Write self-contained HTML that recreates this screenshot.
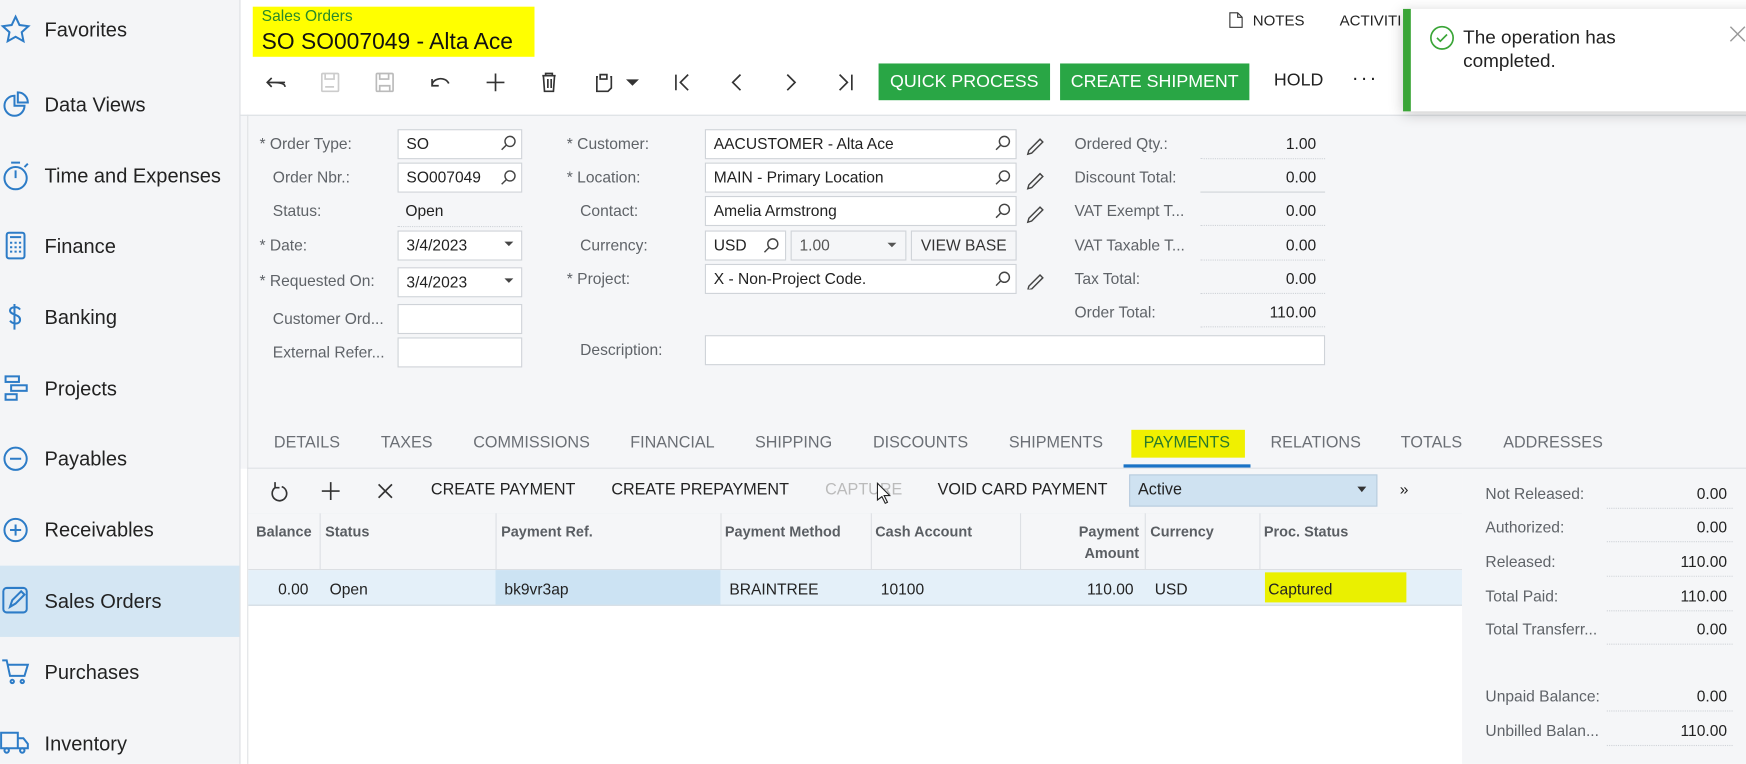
<!DOCTYPE html>
<html><head><meta charset="utf-8"><style>
html,body{margin:0;padding:0;width:1746px;height:764px;overflow:hidden;background:#fff}
#w{position:absolute;left:0;top:0;width:1568px;height:686px;transform:scale(1.11352);transform-origin:0 0;font-family:"Liberation Sans",sans-serif;color:#222}
.a{position:absolute}
.t{position:absolute;white-space:nowrap;line-height:20px;font-size:14px}
.lb{color:#5f6368}
.in{position:absolute;background:#fff;border:1px solid #cfd3d8;box-sizing:border-box;height:27px;font-size:14px;line-height:25px;padding-left:7px;white-space:nowrap}
.ul{position:absolute;border-bottom:1px dotted #cfd3d8;height:0}
.side{font-size:18px;color:#222}
.tab{position:absolute;top:388px;font-size:14.5px;color:#6b6f75;line-height:20px}
.gh{position:absolute;font-size:13px;font-weight:bold;color:#5a5e63;line-height:19px}
.gc{position:absolute;top:519px;font-size:14px;line-height:20px}
.vl{position:absolute;width:1px;background:#dde0e4}
</style></head><body><div id="w">
<!-- sidebar -->
<div class="a" style="left:0;top:0;width:215px;height:686px;background:#f4f5f7;border-right:1px solid #dcdfe3"></div>
<div class="a" style="left:0;top:508px;width:215px;height:64px;background:#d4e6f3"></div>
<svg class="a" style="left:0;top:0" width="40" height="686" fill="none" stroke="#2d7cc7" stroke-width="1.8">
<path d="M14 15l3.5 7.5 8 1-6 5.5 1.6 8L14 33l-7.1 4 1.6-8-6-5.5 8-1z"/>
<path d="M13 86a9 9 0 1 0 9 9h-9z"/><path d="M16 83v9h9a9 9 0 0 0-9-9z"/>
<circle cx="14" cy="160" r="10"/><path d="M14 153v7M10 146h8M22 150l3-3"/>
<rect x="6" y="209" width="16" height="23" rx="2"/><path d="M9 213h10M9 218h2M13 218h2M17 218h2M9 222h2M13 222h2M17 222h2M9 226h2M13 226h2M17 226h2"/>
<path d="M18 278c-2-3-9-3-9 1s9 3 9 8-7 4-9 1M13 273v23"/>
<rect x="5" y="338" width="12" height="5"/><rect x="10" y="346" width="14" height="5"/><rect x="5" y="354" width="10" height="5"/>
<circle cx="14" cy="412" r="10"/><path d="M9 412h10"/>
<circle cx="14" cy="476" r="10"/><path d="M9 476h10M14 471v10"/>
<rect x="3" y="528" width="21" height="22" rx="3"/><path d="M9 545l2-6 8-8 3 3-8 8z"/>
<path d="M2 593h4l3 14h13l3-10H7"/><circle cx="11" cy="612" r="1.5"/><circle cx="20" cy="612" r="1.5"/>
<path d="M1 658h15v14H1zM16 663h5l4 5v4h-9"/><circle cx="6" cy="674" r="2"/><circle cx="20" cy="674" r="2"/>
</svg>
<div class="t side" style="left:40px;top:17px">Favorites</div>
<div class="t side" style="left:40px;top:84px">Data Views</div>
<div class="t side" style="left:40px;top:148px">Time and Expenses</div>
<div class="t side" style="left:40px;top:211px">Finance</div>
<div class="t side" style="left:40px;top:275px">Banking</div>
<div class="t side" style="left:40px;top:339px">Projects</div>
<div class="t side" style="left:40px;top:402px">Payables</div>
<div class="t side" style="left:40px;top:466px">Receivables</div>
<div class="t side" style="left:40px;top:530px">Sales Orders</div>
<div class="t side" style="left:40px;top:594px">Purchases</div>
<div class="t side" style="left:40px;top:658px">Inventory</div>
<!-- header -->
<div class="a" style="left:227px;top:6px;width:253px;height:45px;background:#ffff00"></div>
<div class="t" style="left:235px;top:4px;color:#2a8a2a;font-size:14px">Sales Orders</div>
<div class="t" style="left:235px;top:26px;font-size:20.5px;line-height:24px;color:#111">SO SO007049 - Alta Ace</div>
<svg class="a" style="left:1103px;top:10px" width="14" height="16" fill="none" stroke="#333"><path d="M1.5 1.5h7l4 4v9h-11z M8.5 1.5v4h4"/></svg>
<div class="t" style="left:1125px;top:9px;font-size:13.5px">NOTES</div>
<div class="t" style="left:1203px;top:9px;font-size:13.5px">ACTIVITI</div>
<svg class="a" style="left:230px;top:60px" width="550" height="28" fill="none" stroke="#333" stroke-width="1.5">
<path d="M26 14h-16M14 10l-4 4 4 4M10 14c8 0 16 0 16 4"/>
<g stroke="#ccc"><rect x="59" y="6" width="15" height="16" rx="1"/><path d="M62 6v5h8V6M62 18h8"/></g>
<g stroke="#bbb"><rect x="108" y="6" width="15" height="16" rx="1"/><path d="M111 6v5h8V6M111 22v-5h9v5"/></g>
<path d="M158 17c0-7 12-9 15-2M158 11v6h6"/>
<path d="M215 6v16M207 14h16"/>
<path d="M257 8h12M260 8v-2h6v2M258 8l1 14h8l1-14M262 11v8M265 11v8"/>
<path d="M307 9h-1v13h10l3-3V9h-1M309 7h6v4h-6z"/><path d="M334 12l4 4 4-4z" fill="#333"/>
<path d="M377 7v14M388 7l-7 7 7 7"/>
<path d="M435 7l-7 7 7 7"/><path d="M477 7l7 7-7 7"/>
<path d="M524 7l7 7-7 7M535 7v14"/>
</svg>
<div class="a" style="left:789px;top:57px;width:154px;height:33px;background:#29a645;color:#fff;font-size:16px;line-height:33px;text-align:center">QUICK PROCESS</div>
<div class="a" style="left:952px;top:57px;width:170px;height:33px;background:#29a645;color:#fff;font-size:16px;line-height:33px;text-align:center">CREATE SHIPMENT</div>
<div class="t" style="left:1144px;top:63px;font-size:16px">HOLD</div>
<div class="t" style="left:1214px;top:60px;font-size:18px;letter-spacing:2px">···</div>
<!-- form area -->
<div class="a" style="left:216px;top:103px;width:1352px;height:317px;background:#f5f6f8;border-top:1px solid #dcdfe3"></div>
<div class="a" style="left:222px;top:103px;width:1px;height:583px;background:#e0e2e5"></div>
<div class="t lb" style="left:233px;top:119px">* Order Type:</div>
<div class="t lb" style="left:245px;top:149px">Order Nbr.:</div>
<div class="t lb" style="left:245px;top:179px">Status:</div>
<div class="t lb" style="left:233px;top:210px">* Date:</div>
<div class="t lb" style="left:233px;top:242px">* Requested On:</div>
<div class="t lb" style="left:245px;top:276px">Customer Ord...</div>
<div class="t lb" style="left:245px;top:306px">External Refer...</div>
<div class="in" style="left:357px;top:116px;width:112px">SO</div>
<div class="in" style="left:357px;top:146px;width:112px">SO007049</div>
<div class="t" style="left:364px;top:179px">Open</div>
<div class="ul" style="left:357px;top:203px;width:112px"></div>
<div class="in" style="left:357px;top:207px;width:112px">3/4/2023</div>
<div class="in" style="left:357px;top:240px;width:112px">3/4/2023</div>
<div class="in" style="left:357px;top:273px;width:112px"></div>
<div class="in" style="left:357px;top:303px;width:112px"></div>
<div class="t lb" style="left:509px;top:119px">* Customer:</div>
<div class="t lb" style="left:509px;top:149px">* Location:</div>
<div class="t lb" style="left:521px;top:179px">Contact:</div>
<div class="t lb" style="left:521px;top:210px">Currency:</div>
<div class="t lb" style="left:509px;top:240px">* Project:</div>
<div class="t lb" style="left:521px;top:304px">Description:</div>
<div class="in" style="left:633px;top:116px;width:280px">AACUSTOMER - Alta Ace</div>
<div class="in" style="left:633px;top:146px;width:280px">MAIN - Primary Location</div>
<div class="in" style="left:633px;top:176px;width:280px">Amelia Armstrong</div>
<div class="in" style="left:633px;top:207px;width:73px">USD</div>
<div class="in" style="left:710px;top:207px;width:104px;background:#f5f6f8;color:#555">1.00</div>
<div class="in" style="left:818px;top:207px;width:95px;background:#f5f6f8;padding:0;text-align:center;color:#333">VIEW BASE</div>
<div class="in" style="left:633px;top:237px;width:280px">X - Non-Project Code.</div>
<div class="in" style="left:633px;top:301px;width:557px"></div>
<svg class="a" style="left:440px;top:110px" width="500" height="150" fill="none" stroke="#444" stroke-width="1.3">
<g id="m"><circle cx="18" cy="17" r="4.5"/><path d="M14.5 20.5l-4 4"/></g>
<use href="#m" y="31"/>
<path d="M13 107l4 4 4-4z" fill="#444" stroke="none"/><path d="M13 140l4 4 4-4z" fill="#444" stroke="none"/>
<use href="#m" x="444"/><use href="#m" x="444" y="31"/><use href="#m" x="444" y="61"/><use href="#m" x="236" y="92"/><use href="#m" x="444" y="122"/>
<path d="M357 108l4 4 4-4z" fill="#555" stroke="none"/>
<g id="p"><path d="M484 25l10-10 2.5 2.5-10 10-3.5 1z"/></g>
<use href="#p" y="31"/><use href="#p" y="61"/><use href="#p" y="122"/>
</svg>
<div class="t lb" style="left:965px;top:119px">Ordered Qty.:</div>
<div class="t lb" style="left:965px;top:149px">Discount Total:</div>
<div class="t lb" style="left:965px;top:179px">VAT Exempt T...</div>
<div class="t lb" style="left:965px;top:210px">VAT Taxable T...</div>
<div class="t lb" style="left:965px;top:240px">Tax Total:</div>
<div class="t lb" style="left:965px;top:270px">Order Total:</div>
<div class="t" style="left:1082px;width:100px;text-align:right;top:119px">1.00</div>
<div class="t" style="left:1082px;width:100px;text-align:right;top:149px">0.00</div>
<div class="t" style="left:1082px;width:100px;text-align:right;top:179px">0.00</div>
<div class="t" style="left:1082px;width:100px;text-align:right;top:210px">0.00</div>
<div class="t" style="left:1082px;width:100px;text-align:right;top:240px">0.00</div>
<div class="t" style="left:1082px;width:100px;text-align:right;top:270px">110.00</div>
<div class="ul" style="left:1078px;top:142px;width:112px"></div>
<div class="ul" style="left:1078px;top:172px;width:112px;border-bottom:1px solid #cfd3d8"></div>
<div class="ul" style="left:1078px;top:202px;width:112px"></div>
<div class="ul" style="left:1078px;top:233px;width:112px"></div>
<div class="ul" style="left:1078px;top:263px;width:112px"></div>
<div class="ul" style="left:1078px;top:293px;width:112px"></div>
<!-- tabs -->
<div class="a" style="left:1016px;top:386px;width:102px;height:25px;background:#f0f000"></div>
<div class="a" style="left:1009px;top:417px;width:114px;height:3px;background:#1a73c6"></div>
<div class="a" style="left:222px;top:420px;width:1346px;height:1px;background:#dcdfe3"></div>
<div class="tab" style="left:246px">DETAILS</div>
<div class="tab" style="left:342px">TAXES</div>
<div class="tab" style="left:425px">COMMISSIONS</div>
<div class="tab" style="left:566px">FINANCIAL</div>
<div class="tab" style="left:678px">SHIPPING</div>
<div class="tab" style="left:784px">DISCOUNTS</div>
<div class="tab" style="left:906px">SHIPMENTS</div>
<div class="tab" style="left:1027px;color:#2a7a2a">PAYMENTS</div>
<div class="tab" style="left:1141px">RELATIONS</div>
<div class="tab" style="left:1258px">TOTALS</div>
<div class="tab" style="left:1350px">ADDRESSES</div>
<!-- payments toolbar -->
<div class="a" style="left:223px;top:421px;width:1090px;height:40px;background:#f5f6f8;border-bottom:1px solid #dcdfe3"></div>
<svg class="a" style="left:238px;top:430px" width="120" height="22" fill="none" stroke="#333" stroke-width="1.5">
<path d="M15 7a6.5 6.5 0 1 1-6 1M9 3v5h4"/><path d="M59 3v16M51 11h16"/><path d="M102 5l12 12M114 5l-12 12"/></svg>
<div class="t" style="left:387px;top:430px;font-size:14.5px">CREATE PAYMENT</div>
<div class="t" style="left:549px;top:430px;font-size:14.5px">CREATE PREPAYMENT</div>
<div class="t" style="left:741px;top:430px;font-size:14.5px;color:#bbb">CAPTURE</div>
<div class="t" style="left:842px;top:430px;font-size:14.5px">VOID CARD PAYMENT</div>
<svg class="a" style="left:786px;top:433px" width="14" height="20"><path d="M2 1v15l4-3 3 6 2-1-3-6h5z" fill="#fff" stroke="#222"/></svg>
<div class="a" style="left:1014px;top:426px;width:223px;height:29px;background:#cfe2f1;border:1px solid #b8ccdd;box-sizing:border-box;font-size:14.5px;line-height:27px;padding-left:7px">Active</div>
<svg class="a" style="left:1218px;top:436px" width="10" height="8"><path d="M1 1h8L5 6z" fill="#333"/></svg>
<div class="t" style="left:1257px;top:429px;font-size:14px">»</div>
<!-- grid -->
<div class="a" style="left:223px;top:461px;width:1090px;height:50px;background:#f5f6f8;border-bottom:1px solid #dcdfe3"></div>
<div class="a" style="left:223px;top:512px;width:1090px;height:31px;background:#e4f0f9;border-bottom:1px solid #d0d8e0"></div>
<div class="a" style="left:445px;top:512px;width:202px;height:31px;background:#cce3f3"></div>
<div class="a" style="left:1136px;top:514px;width:127px;height:27px;background:#eaf000"></div>
<div class="vl" style="left:287px;top:461px;height:50px"></div>
<div class="vl" style="left:445px;top:461px;height:50px"></div>
<div class="vl" style="left:647px;top:461px;height:50px"></div>
<div class="vl" style="left:782px;top:461px;height:50px"></div>
<div class="vl" style="left:916px;top:461px;height:50px"></div>
<div class="vl" style="left:1028px;top:461px;height:50px"></div>
<div class="vl" style="left:1131px;top:461px;height:50px"></div>
<div class="gh" style="left:230px;top:468px">Balance</div>
<div class="gh" style="left:292px;top:468px">Status</div>
<div class="gh" style="left:450px;top:468px">Payment Ref.</div>
<div class="gh" style="left:651px;top:468px">Payment Method</div>
<div class="gh" style="left:786px;top:468px">Cash Account</div>
<div class="gh" style="left:920px;width:103px;text-align:right;top:468px">Payment<br>Amount</div>
<div class="gh" style="left:1033px;top:468px">Currency</div>
<div class="gh" style="left:1135px;top:468px">Proc. Status</div>
<div class="gc" style="left:230px;width:47px;text-align:right">0.00</div>
<div class="gc" style="left:296px">Open</div>
<div class="gc" style="left:453px">bk9vr3ap</div>
<div class="gc" style="left:655px">BRAINTREE</div>
<div class="gc" style="left:791px">10100</div>
<div class="gc" style="left:920px;width:98px;text-align:right">110.00</div>
<div class="gc" style="left:1037px">USD</div>
<div class="gc" style="left:1139px">Captured</div>
<!-- right summary -->
<div class="a" style="left:1313px;top:421px;width:255px;height:265px;background:#f5f6f8"></div>
<div class="t lb" style="left:1334px;top:433px">Not Released:</div>
<div class="t lb" style="left:1334px;top:463px">Authorized:</div>
<div class="t lb" style="left:1334px;top:494px">Released:</div>
<div class="t lb" style="left:1334px;top:525px">Total Paid:</div>
<div class="t lb" style="left:1334px;top:555px">Total Transferr...</div>
<div class="t lb" style="left:1334px;top:615px">Unpaid Balance:</div>
<div class="t lb" style="left:1334px;top:646px">Unbilled Balan...</div>
<div class="t" style="left:1451px;width:100px;text-align:right;top:433px">0.00</div>
<div class="t" style="left:1451px;width:100px;text-align:right;top:463px">0.00</div>
<div class="t" style="left:1451px;width:100px;text-align:right;top:494px">110.00</div>
<div class="t" style="left:1451px;width:100px;text-align:right;top:525px">110.00</div>
<div class="t" style="left:1451px;width:100px;text-align:right;top:555px">0.00</div>
<div class="t" style="left:1451px;width:100px;text-align:right;top:615px">0.00</div>
<div class="t" style="left:1451px;width:100px;text-align:right;top:646px">110.00</div>
<div class="ul" style="left:1443px;top:456px;width:113px"></div>
<div class="ul" style="left:1443px;top:486px;width:113px"></div>
<div class="ul" style="left:1443px;top:517px;width:113px"></div>
<div class="ul" style="left:1443px;top:548px;width:113px"></div>
<div class="ul" style="left:1443px;top:578px;width:113px"></div>
<div class="ul" style="left:1443px;top:638px;width:113px"></div>
<div class="ul" style="left:1443px;top:669px;width:113px"></div>
<!-- toast -->
<div class="a" style="left:1260px;top:8px;width:320px;height:92px;background:#fff;box-shadow:0 3px 12px rgba(0,0,0,.22)"></div>
<div class="a" style="left:1260px;top:8px;width:7px;height:92px;background:#3aa537"></div>
<svg class="a" style="left:1283px;top:22px" width="24" height="24" fill="none" stroke="#3aa537" stroke-width="1.5"><circle cx="12" cy="12" r="10"/><path d="M7.5 12l3 3 6-6"/></svg>
<div class="t" style="left:1314px;top:23px;font-size:17px;line-height:21px;color:#222">The operation has<br>completed.</div>
<svg class="a" style="left:1553px;top:23px" width="15" height="15" stroke="#999" stroke-width="1.3"><path d="M1 1l13 13M14 1L1 14"/></svg>
</div></body></html>
